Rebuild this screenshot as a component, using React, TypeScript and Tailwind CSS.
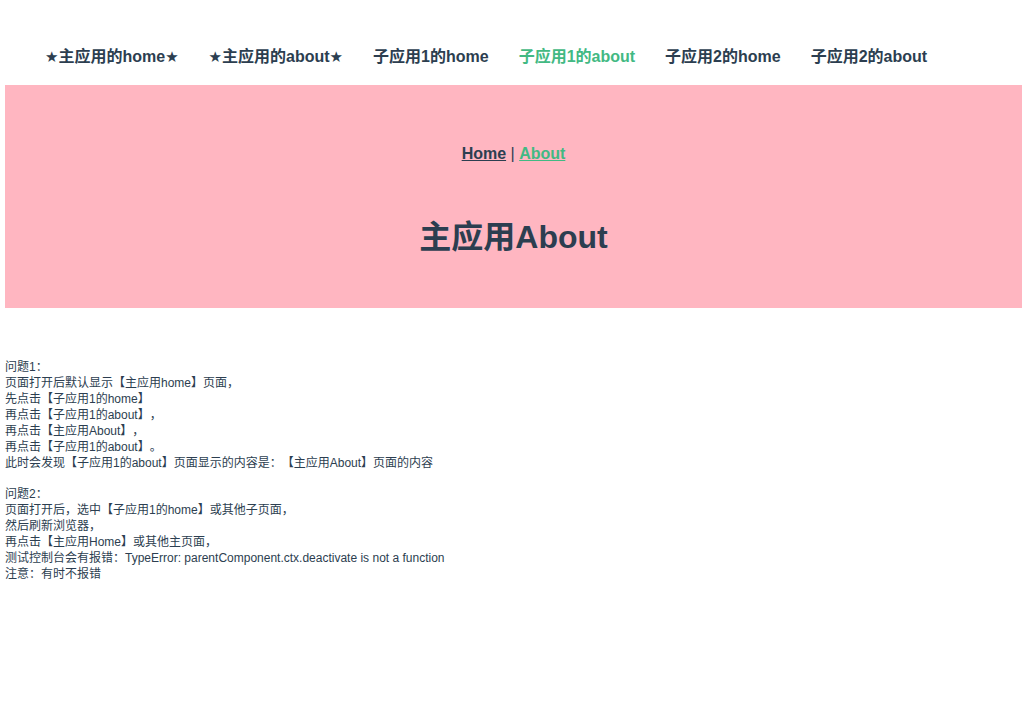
const navItems = [
  { label: "主应用的home", star: true, active: false },
  { label: "主应用的about", star: true, active: false },
  { label: "子应用1的home", star: false, active: false },
  { label: "子应用1的about", star: false, active: true },
  { label: "子应用2的home", star: false, active: false },
  { label: "子应用2的about", star: false, active: false },
];

const notes = [
  "问题1：",
  "页面打开后默认显示【主应用home】页面，",
  "先点击【子应用1的home】",
  "再点击【子应用1的about】，",
  "再点击【主应用About】，",
  "再点击【子应用1的about】。",
  "此时会发现【子应用1的about】页面显示的内容是：【主应用About】页面的内容",
  "",
  "问题2：",
  "页面打开后，选中【子应用1的home】或其他子页面，",
  "然后刷新浏览器，",
  "再点击【主应用Home】或其他主页面，",
  "测试控制台会有报错：TypeError: parentComponent.ctx.deactivate is not a function",
  "注意：有时不报错",
];

function Star() {
  return (
    <span style={{ fontFamily: '"DejaVu Sans", sans-serif' }} className="text-[15px] font-normal">
      ★
    </span>
  );
}

export default function App() {
  return (
    <div
      className="min-h-[705px] bg-white text-[#2c3e50] [text-spacing-trim:space-all]"
      style={{ fontFamily: '"Liberation Sans", Arial, "Noto Sans CJK SC", sans-serif' }}
    >
      <nav className="flex h-[85px] items-start gap-[30px] pl-[45px] pt-[48px]">
        {navItems.map((item) => (
          <a
            key={item.label}
            className={`text-[16px] font-bold leading-[18px] ${item.active ? "text-[#42b983]" : "text-[#2c3e50]"}`}
          >
            {item.star && <Star />}
            {item.label}
            {item.star && <Star />}
          </a>
        ))}
      </nav>

      <div className="mx-[5px] h-[223px] bg-[#ffb6c1] text-center">
        <div className="pt-[60px] text-[16px] font-bold leading-[18px]">
          <a className="text-[#2c3e50] underline">Home</a>
          <span className="font-normal"> | </span>
          <a className="text-[#42b983] underline">About</a>
        </div>
        <h1 className="mt-[56px] text-[32px] font-bold leading-[37px]">主应用About</h1>
      </div>

      <div className="mt-[51px] px-[5px] text-[12px] leading-[16px]">
        {notes.map((line, i) =>
          line ? <div key={i}>{line}</div> : <div key={i} className="h-[15px]" />
        )}
      </div>
    </div>
  );
}
